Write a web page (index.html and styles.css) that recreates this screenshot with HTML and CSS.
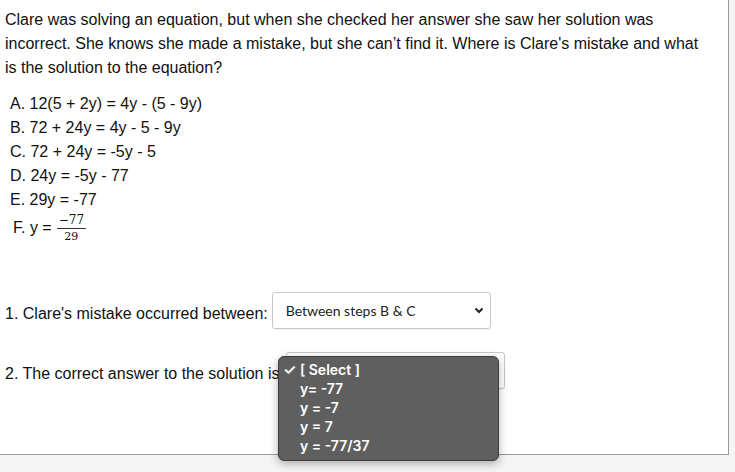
FILE: index.html
```html
<!DOCTYPE html>
<html lang="en">

<head>
    <meta charset="UTF-8">
    <title>Quiz question</title>
    <link rel="stylesheet" href="styles.css">
</head>

<body>
    <div class="page">
        <div class="question">
            <p class="prompt">Clare was solving an equation, but when she checked her answer she saw her solution was incorrect. She knows she made a mistake, but she can’t find it. Where is Clare's mistake and what is the solution to the equation?</p>

            <ul class="steps">
                <li>A. 12(5 + 2y) = 4y - (5 - 9y)</li>
                <li>B. 72 + 24y = 4y - 5 - 9y</li>
                <li>C. 72 + 24y = -5y - 5</li>
                <li>D. 24y = -5y - 77</li>
                <li>E. 29y = -77</li>
                <li class="step-f">F. y = <span class="frac"><span class="num">−77</span><span class="den">29</span></span></li>
            </ul>

            <p class="blank first"><span class="label">1. Clare's mistake occurred between:</span> <span class="select">Between steps B &amp; C <svg class="chev" width="10" height="7" viewBox="0 0 10 7"><path d="M1.5 1.5 L5 5 L8.5 1.5" fill="none" stroke="#222" stroke-width="2"/></svg></span></p>

            <p class="blank second"><span class="label">2. The correct answer to the solution is</span> <span class="select">&nbsp;<svg class="chev" width="10" height="7" viewBox="0 0 10 7"><path d="M1.5 1.5 L5 5 L8.5 1.5" fill="none" stroke="#222" stroke-width="2"/></svg></span></p>
        </div>

        <!-- open dropdown of the second select -->
        <ul class="menu">
            <li class="checked"><span class="tick">✓</span>[ Select ]</li>
            <li>y= -77</li>
            <li>y = -7</li>
            <li>y = 7</li>
            <li>y = -77/37</li>
        </ul>
    </div>
</body>

</html>
```

FILE: styles.css
```css
body {
    margin: 0;
    background-color: #f5f5f5;
    font-family: "Liberation Sans", Arial, sans-serif;
    color: #111;
}

.page {
    position: relative;
    min-height: 472px;
}

.question {
    width: 729px;
    height: 455px;
    background-color: #fff;
    border-right: 1px solid #9a9a9a;
    border-bottom: 1px solid #9a9a9a;
    box-sizing: border-box;
    font-size: 16px;
    line-height: 24px;
}

.prompt {
    margin: 0;
    padding: 8px 20px 0 5px;
}

.steps {
    list-style: none;
    margin: 0;
    padding: 12px 0 0 10px;
}

.step-f {
    padding-left: 3px;
    display: flex;
    align-items: center;
    height: 32px;
}

.frac {
    display: inline-flex;
    flex-direction: column;
    align-items: center;
    margin-left: 5px;
    font-family: "DejaVu Serif", serif;
    font-size: 12px;
    line-height: 12px;
}

.frac .num {
    border-bottom: 1px solid #333;
    padding: 0 2px 2px;
}

.frac .den {
    padding-top: 2px;
    font-size: 11px;
}

.blank {
    margin: 0;
    padding-left: 5px;
    display: flex;
    align-items: center;
    gap: 4px;
}

.blank .label {
    margin-top: 6px;
}

.first {
    margin-top: 48px;
}

.second {
    margin-top: 23px;
    gap: 6px;
}

.select {
    display: flex;
    align-items: center;
    justify-content: space-between;
    width: 219px;
    height: 37px;
    box-sizing: border-box;
    padding: 0 6px 0 13px;
    border: 1px solid #c8c8c8;
    border-radius: 3px;
    font-family: Lato, "Noto Sans", sans-serif;
    font-size: 14px;
    color: #222;
    box-shadow: 0 1px 1px rgba(0, 0, 0, 0.05);
}

.menu {
    position: absolute;
    z-index: 2;
    left: 278px;
    top: 356px;
    width: 221px;
    height: 105px;
    box-sizing: border-box;
    margin: 0;
    padding: 3px 0 0 21px;
    list-style: none;
    background-color: #5f5f5f;
    border: 1px solid #3c3c3c;
    border-radius: 6px;
    box-shadow: 0 3px 10px rgba(0, 0, 0, 0.3);
    font-family: Inter, "Noto Sans", sans-serif;
    font-weight: 600;
    font-size: 14px;
    line-height: 19px;
    color: #fff;
}

.menu .checked {
    position: relative;
}

.menu .tick {
    position: absolute;
    left: -17px;
    font-size: 15px;
}
```
